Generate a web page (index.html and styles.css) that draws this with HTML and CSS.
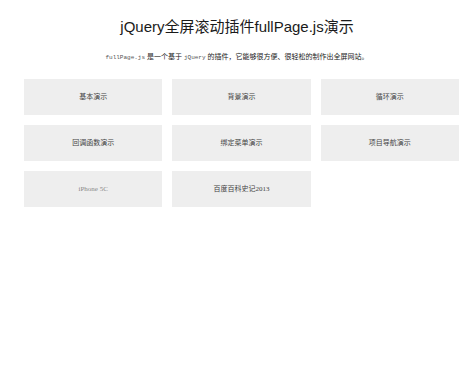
FILE: index.html
```html
<!DOCTYPE html>
<html lang="zh-CN">
<head>
    <meta charset="UTF-8">
    <meta name="viewport" content="width=device-width, initial-scale=1.0">
    <title>jQuery全屏滚动插件fullPage.js演示</title>
    <link rel="stylesheet" href="styles.css">
</head>
<body>
    <div class="header">
        <h1>jQuery全屏滚动插件fullPage.js演示</h1>
        <p class="intro"><span class="mono">fullPage.js</span> 是一个基于 <span class="mono">jQuery</span> 的插件，它能够很方便、很轻松的制作出全屏网站。</p>
    </div>

    <ul class="demos">
        <li><a href="#">基本演示</a></li>
        <li><a href="#">背景演示</a></li>
        <li><a href="#">循环演示</a></li>
        <li><a href="#">回调函数演示</a></li>
        <li><a href="#">绑定菜单演示</a></li>
        <li><a href="#">项目导航演示</a></li>
        <li><a href="#" class="serif">iPhone 5C</a></li>
        <li><a href="#">百度百科史记<span class="serif">2013</span></a></li>
    </ul>
</body>
</html>
```

FILE: styles.css
```css
body {
    margin: 0;
    font-family: "Liberation Sans", "Noto Sans CJK SC", sans-serif;
    background-color: #fff;
    color: #333;
}
.header {
    text-align: center;
    padding-top: 15px;
}
.header h1 {
    margin: 0;
    font-size: 15px;
    line-height: 24px;
    font-weight: normal;
    color: #1a1a1a;
}
.intro {
    margin: 12px 0 0;
    font-size: 7px;
    line-height: 12px;
    color: #222;
}
.mono {
    font-family: "Liberation Mono", monospace;
    font-size: 6px;
    color: #555;
}
.demos {
    list-style: none;
    margin: 15px 0 0 24px;
    padding: 0;
    width: 435px;
    display: grid;
    grid-template-columns: repeat(3, 1fr);
    gap: 10px;
}
.demos li a {
    display: block;
    height: 36px;
    line-height: 36px;
    background: #eee;
    text-align: center;
    font-size: 7px;
    color: #444;
    text-decoration: none;
}
.demos li a.serif {
    font-family: "Liberation Serif", serif;
    color: #888;
}
.serif {
    font-family: "Liberation Serif", serif;
}
```
